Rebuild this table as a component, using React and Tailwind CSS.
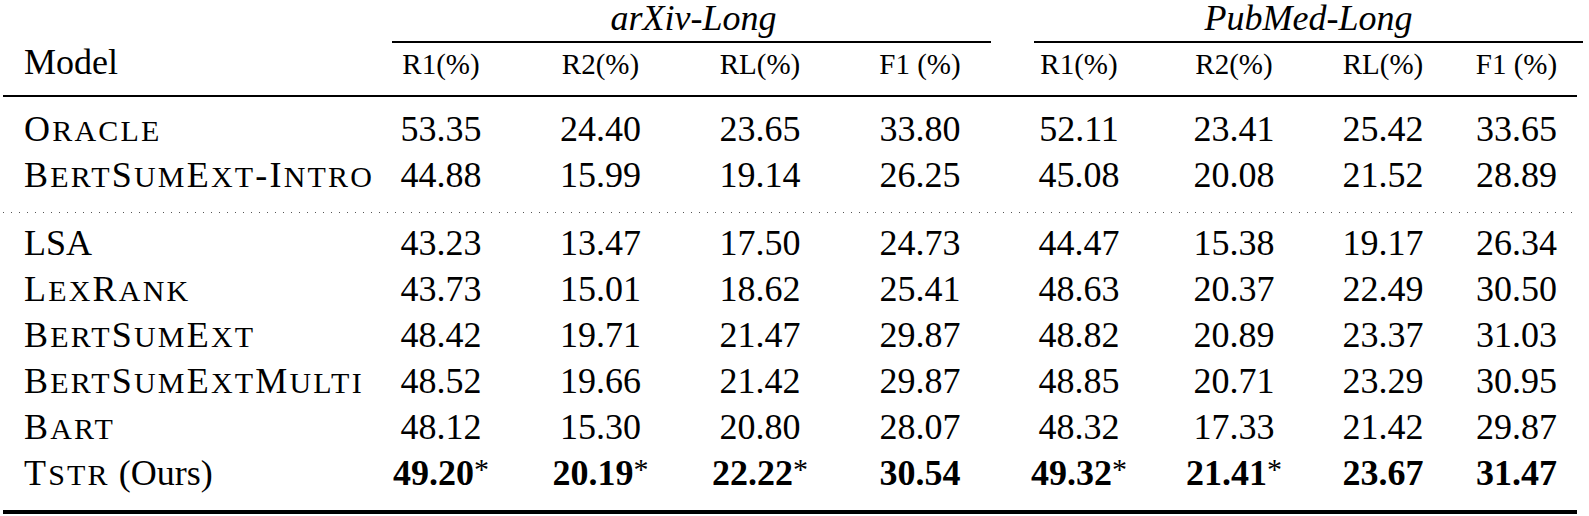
import React from 'react';

const cols = 'grid grid-cols-[358px_160px_159px_160px_160px_158px_152px_146px_121px]';

const topRows = [
  { name: 'Oracle', sc: true, v: ['53.35', '24.40', '23.65', '33.80', '52.11', '23.41', '25.42', '33.65'] },
  { name: 'BertSumExt-Intro', sc: true, v: ['44.88', '15.99', '19.14', '26.25', '45.08', '20.08', '21.52', '28.89'] },
];

const mainRows = [
  { name: 'LSA', v: ['43.23', '13.47', '17.50', '24.73', '44.47', '15.38', '19.17', '26.34'] },
  { name: 'LexRank', sc: true, v: ['43.73', '15.01', '18.62', '25.41', '48.63', '20.37', '22.49', '30.50'] },
  { name: 'BertSumExt', sc: true, v: ['48.42', '19.71', '21.47', '29.87', '48.82', '20.89', '23.37', '31.03'] },
  { name: 'BertSumExtMulti', sc: true, v: ['48.52', '19.66', '21.42', '29.87', '48.85', '20.71', '23.29', '30.95'] },
  { name: 'Bart', sc: true, v: ['48.12', '15.30', '20.80', '28.07', '48.32', '17.33', '21.42', '29.87'] },
];

// best results, star = significant
const ours = [
  ['49.20', true], ['20.19', true], ['22.22', true], ['30.54', false],
  ['49.32', true], ['21.41', true], ['23.67', false], ['31.47', false],
];

const heads = ['R1(%)', 'R2(%)', 'RL(%)', 'F1 (%)', 'R1(%)', 'R2(%)', 'RL(%)', 'F1 (%)'];

// LaTeX-style small caps: lowercase runs drawn as smaller capitals
function SC({ text }) {
  const parts = text.match(/[a-z]+|[^a-z]+/g);
  return (
    <span className="tracking-[2.2px] whitespace-nowrap">
      {parts.map((p, i) =>
        /[a-z]/.test(p) ? (
          <span key={i} className="text-[30px] uppercase">{p}</span>
        ) : (
          <span key={i}>{p}</span>
        )
      )}
    </span>
  );
}

function Row({ name, sc, v }) {
  return (
    <div className={`${cols} h-[46px] leading-[46px] text-[36px]`}>
      <div className="pl-[21px] whitespace-nowrap">{sc ? <SC text={name} /> : name}</div>
      {v.map((x, i) => (
        <div key={i} className="text-center">{x}</div>
      ))}
    </div>
  );
}

export default function App() {
  return (
    <div className="w-[1589px] h-[516px] bg-white text-black [font-family:'Liberation_Serif',serif]">
      <div className="ml-[3px] w-[1574px]">
        <div className="grid grid-cols-[358px_639px_577px]">
          <div />
          <div>
            <div className="h-[36px] leading-[36px] text-[36px] italic text-center pl-[26px]">arXiv-Long</div>
            <div className="mt-[5px] ml-[31px] mr-[9px] h-[1.5px] bg-black" />
          </div>
          <div>
            <div className="h-[36px] leading-[36px] text-[36px] italic text-center pl-[40px]">PubMed-Long</div>
            <div className="mt-[5px] ml-[34px] -mr-[6px] h-[1.5px] bg-black" />
          </div>
        </div>

        <div className={`${cols} items-baseline h-[52px] pt-[1px]`}>
          <div className="pl-[21px] text-[36px] leading-[36px]">Model</div>
          {heads.map((h, i) => (
            <div key={i} className="text-center text-[29px] leading-[36px]">{h}</div>
          ))}
        </div>
        <div className="h-[2px] bg-black" />

        <div className="pt-[9px]">
          {topRows.map((r) => <Row key={r.name} {...r} />)}
        </div>

        <div className="mt-[14px] h-[1px] bg-[repeating-linear-gradient(to_right,#555_0_1.5px,transparent_1.5px_8px)]" />

        <div className="pt-[7px]">
          {mainRows.map((r) => <Row key={r.name} {...r} />)}
          <div className={`${cols} h-[46px] leading-[46px] text-[36px]`}>
            <div className="pl-[21px] whitespace-nowrap">
              <SC text="Tstr" /> (Ours)
            </div>
            {ours.map(([x, star], i) => (
              <div key={i} className="text-center">
                <span className="font-bold">{x}</span>
                {star && <span className="relative -top-[6px] text-[30px]">*</span>}
              </div>
            ))}
          </div>
        </div>

        <div className="mt-[14px] h-[4px] bg-black" />
      </div>
    </div>
  );
}
